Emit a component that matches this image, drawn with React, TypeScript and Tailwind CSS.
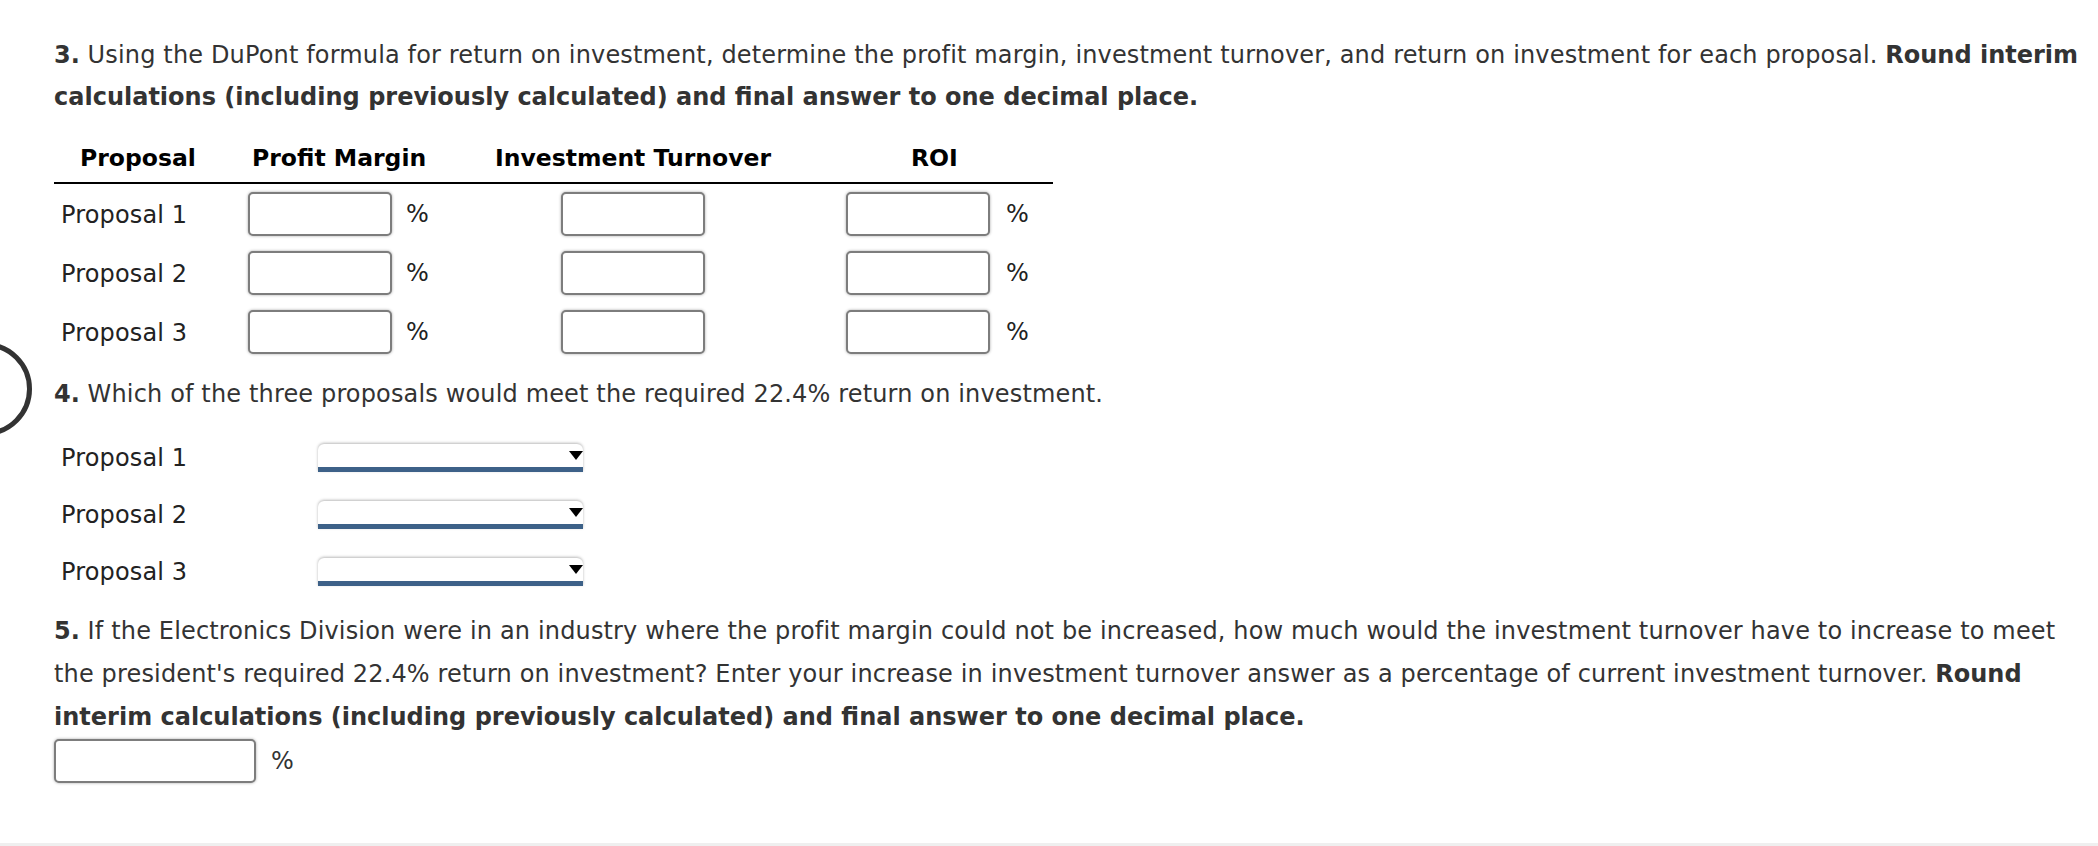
import React from "react";

const font = { fontFamily: '"DejaVu Sans", Verdana, sans-serif' };

function NumberBox({ width = "w-[144px]" }: { width?: string }) {
  return (
    <div
      className={`${width} h-[44px] shrink-0 rounded-[5px] border-2 border-[#7d7d7d] bg-white shadow-[0_0_3px_rgba(0,0,0,0.35)]`}
    />
  );
}

function Dropdown() {
  return (
    <div className="relative h-[28px] w-[265px] rounded-t-[6px] border-b-[5px] border-[#3d6188] bg-white shadow-[0_-1px_3px_rgba(0,0,0,0.28)]">
      <svg
        className="absolute right-0 top-[7px]"
        width="14"
        height="9"
        viewBox="0 0 14 9"
      >
        <polygon points="0,0 14,0 7,9" fill="#000" />
      </svg>
    </div>
  );
}

const rows = ["Proposal 1", "Proposal 2", "Proposal 3"];

export default function App() {
  return (
    <div
      className="relative h-[846px] w-full overflow-hidden bg-white text-[24px] tracking-[0.15px] text-[#333]"
      style={font}
    >
      {/* cursor ring at the left edge */}
      <div className="absolute left-[-62px] top-[342px] h-[94px] w-[94px] rounded-full border-[5px] border-[#333]" />

      <div className="pl-[54px] pr-[13px] pt-[34px]">
        {/* question 3 */}
        <p className="leading-[42px]">
          <b className="tracking-normal">3.</b> Using the DuPont formula for return on investment, determine
          the profit margin, investment turnover, and return on investment for
          each proposal.{" "}
          <b className="tracking-normal">
            Round interim calculations (including previously calculated) and
            final answer to one decimal place.
          </b>
        </p>

        <div className="mt-[18px] w-[999px]">
          <div className="flex h-[48px] items-center border-b-2 border-black pl-[26px] text-[23.5px] font-bold tracking-normal text-black">
            <span className="w-[172px] shrink-0">Proposal</span>
            <span className="w-[243px] shrink-0">Profit Margin</span>
            <span className="w-[416px] shrink-0">Investment Turnover</span>
            <span>ROI</span>
          </div>
          {rows.map((r) => (
            <div
              key={r}
              className="grid h-[59px] grid-cols-[194px_313px_285px_207px] items-center text-[#222]"
            >
              <span className="pl-[7px] pt-[3px]">{r}</span>
              <div className="flex items-center gap-[14px]">
                <NumberBox />
                <span>%</span>
              </div>
              <div className="flex items-center">
                <NumberBox />
              </div>
              <div className="flex items-center gap-[16px]">
                <NumberBox />
                <span>%</span>
              </div>
            </div>
          ))}
        </div>

        {/* question 4 */}
        <p className="mt-[12px] leading-[42px]">
          <b className="tracking-normal">4.</b> Which of the three proposals would meet the required 22.4%
          return on investment.
        </p>
        <div className="mt-[14px]">
          {rows.map((r) => (
            <div key={r} className="flex h-[57px] items-center text-[#222]">
              <span className="w-[264px] shrink-0 pl-[7px]">{r}</span>
              <Dropdown />
            </div>
          ))}
        </div>

        {/* question 5 */}
        <p className="mr-[16px] mt-[10px] leading-[43px]">
          <b className="tracking-normal">5.</b> If the Electronics Division were in an industry where the
          profit margin could not be increased, how much would the investment
          turnover have to increase to meet the president's required 22.4%
          return on investment? Enter your increase in investment turnover
          answer as a percentage of current investment turnover.{" "}
          <b className="tracking-normal">
            Round interim calculations (including previously calculated) and
            final answer to one decimal place.
          </b>
        </p>
        <div className="flex items-center gap-[15px]">
          <NumberBox width="w-[202px]" />
          <span>%</span>
        </div>
      </div>

      <div className="absolute bottom-0 left-0 h-[3px] w-full bg-[#efefef]" />
    </div>
  );
}
